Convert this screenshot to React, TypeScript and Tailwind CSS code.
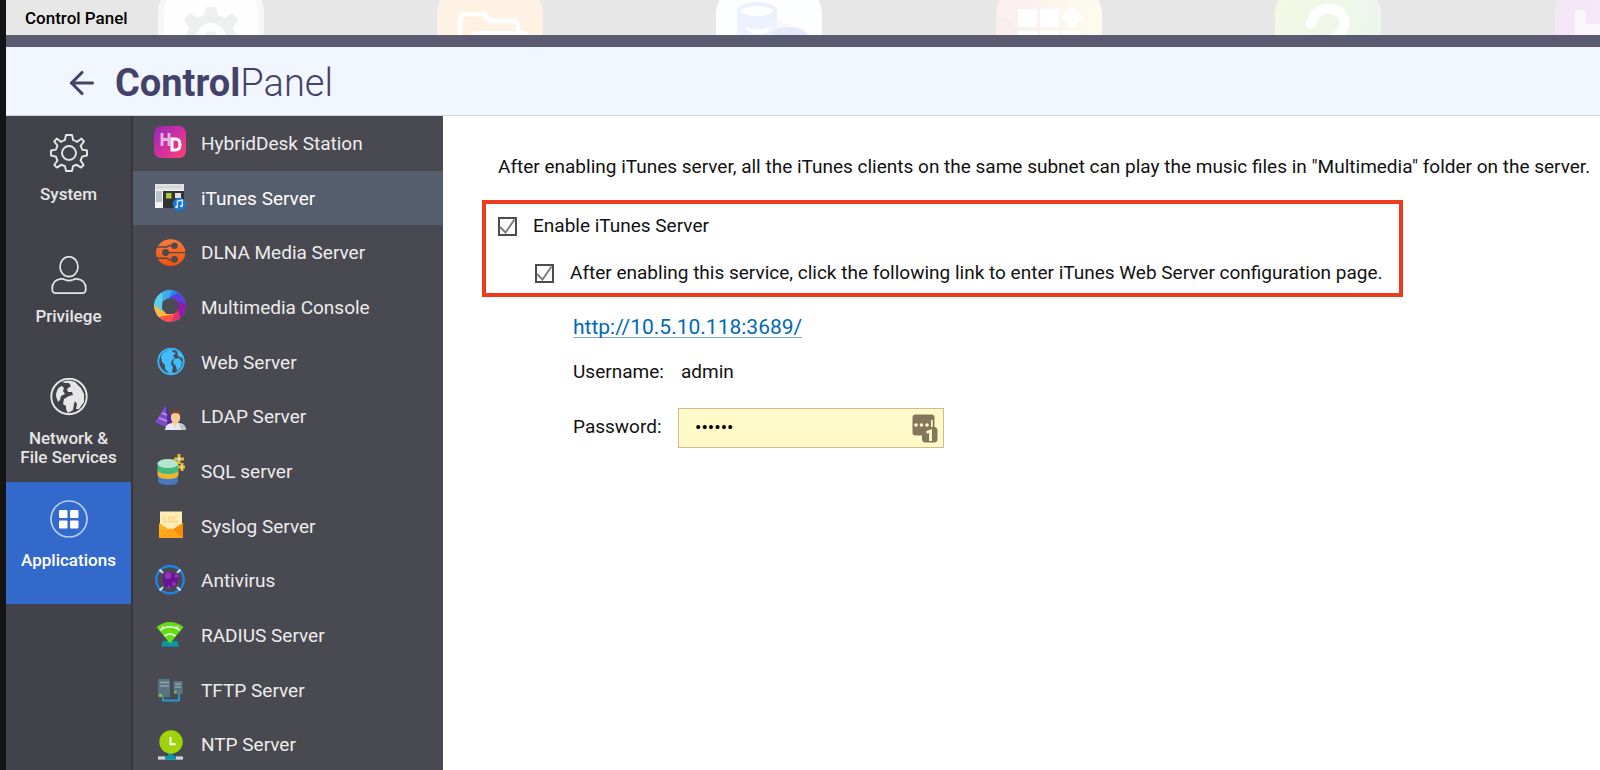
import React from "react";
import { ArrowLeft } from "lucide-react";

const Backdrop = () => (
  <svg
    aria-hidden="true"
    className="absolute inset-0 h-full w-full"
    viewBox="6 0 1594 35"
    preserveAspectRatio="xMinYMin slice"
  >
    <defs>
      <linearGradient id="store" x1="0" x2="1" y1="0" y2="0.2">
        <stop offset="0.3" stopColor="#fcefef" />
        <stop offset="0.6" stopColor="#fcf7ec" />
        <stop offset="1" stopColor="#fbfbee" />
      </linearGradient>
      <linearGradient id="help" x1="0" x2="1" y1="0" y2="0.4">
        <stop offset="0" stopColor="#f5f8e4" />
        <stop offset="1" stopColor="#ebf6eb" />
      </linearGradient>
      <linearGradient id="hybrid" x1="0" x2="1">
        <stop offset="0" stopColor="#f4e6f6" />
        <stop offset="1" stopColor="#f6e9f8" />
      </linearGradient>
    </defs>
    <rect x="158" y="-14" width="106" height="106" rx="26" fill="#f7f7f7" />
    <rect x="164" y="-14" width="94" height="106" rx="26" fill="#fefefe" />
    <g fill="#edf0ef">
      <path d="M206 7h10l2 8 7 3 7-5 6 7-5 8 4 10h-52l4-10-5-8 6-7 7 5 7-3z" />
      <circle cx="211" cy="38" r="15" fill="#fefefe" />
      <circle cx="211" cy="38" r="7" />
    </g>
    <rect x="437" y="-14" width="106" height="106" rx="28" fill="#fef2e4" />
    <path d="M460 36V22q0-8 7-8h17l6 7h23q5 0 5 6v5" fill="none" stroke="#fff" strokeWidth="4.500" />
    <path d="M471 36q0-5 4-5h52v5z" fill="#fff" />
    <rect x="716" y="-14" width="106" height="106" rx="28" fill="#fdfeff" />
    <path d="M776 17l28 18h-28z" fill="#f7f9ff" />
    <path d="M737 12v23h40V12z" fill="#edf2fe" />
    <path d="M745 27q12 5 26 0-2 7-13 7-10 0-13-7zM741 36q16 4 32-3v3z" fill="#fff" />
    <ellipse cx="757" cy="11" rx="18" ry="7" fill="#fff" stroke="#eaf1fe" strokeWidth="4" />
    <path d="M770 36q3-9 19-9t19 9z" fill="#e5eafa" />
    <rect x="996" y="-14" width="106" height="106" rx="28" fill="url(#store)" />
    <path d="M996 16l14 4 10 15h-24z" fill="#f9eeee" />
    <g fill="#fff">
      <rect x="1018" y="9" width="19" height="18" />
      <rect x="1040" y="9" width="19" height="18" />
      <path d="M1072 7l11 10.500-11 10.500-11-10.500z" />
      <rect x="1018" y="31" width="19" height="5" />
      <rect x="1040" y="31" width="19" height="5" />
      <rect x="1062" y="31" width="18" height="5" />
    </g>
    <rect x="1275" y="-14" width="106" height="106" rx="28" fill="url(#help)" />
    <path d="M1311 24c3-11 10-16 18-15.500 14 1 18 13 14 20-2 5-6 7-8 9" fill="none" stroke="#fff" strokeWidth="10" strokeLinecap="round" />
    <rect x="1555" y="-14" width="106" height="106" rx="28" fill="url(#hybrid)" />
    <path d="M1575 10h11v14h14v12h-25z" fill="#fbf5fc" />
  </svg>
);

const GearIcon = () => (
  <svg viewBox="0 0 38 38" className="size-[38px]" fill="none" stroke="currentColor" strokeWidth="1.900" strokeLinejoin="round" aria-hidden="true">
    <path d="M16 1h6l1.200 5.200q2 .5 3.800 1.700L31.500 4.600 34 7.400 30.600 11.800q1 1.700 1.500 3.800L37 16.500v5l-5 1.200q-.5 2-1.500 3.700L33.600 31 31 33.600l-4.500-3q-1.700 1-3.500 1.500L22 37h-6l-1-4.900q-1.900-.5-3.600-1.500L7 33.600 4.300 31l3.200-4.600q-1-1.700-1.500-3.700L1 21.500v-5l5-.9q.5-2.100 1.500-3.800L4.200 7.400 6.800 4.600l4.300 3.300q1.800-1.200 3.700-1.700z" />
    <circle cx="19" cy="19" r="7" />
  </svg>
);

const PersonIcon = () => (
  <svg viewBox="0 0 38 38" className="size-[38px]" fill="none" stroke="currentColor" strokeWidth="1.700" aria-hidden="true">
    <ellipse cx="19" cy="10.700" rx="9" ry="10" />
    <path d="M6 37.200h26q3.800 0 3.800-4.500 0-8.500-8.500-9.800-2.300-.4-4.300.8-4 1.800-8 0-2-1.200-4.300-.8-8.500 1.300-8.500 9.800 0 4.500 3.800 4.500z" />
  </svg>
);

const GlobeIcon = () => (
  <svg viewBox="0 0 38 38" className="size-[38px]" aria-hidden="true">
    <circle cx="19" cy="18.500" r="17.700" fill="none" stroke="currentColor" strokeWidth="1.900" />
    <path
      fill="currentColor"
      d="M7 13q1-4 5-5l2 2-1 3 2 3-4 2-1 4-2 2-1-3q-2-4 0-8zM12 4q7-3 13 0l6 6 3 6 0 8-5 7-3 0 1-5-2-3-1 3-1 6-5 3-2-4 0-3-3-2 1-5 5-3 4-1-1-3-4 0-1-3 4-3-2-3-4 0z"
    />
  </svg>
);

const AppsIcon = () => (
  <svg viewBox="0 0 38 38" className="size-[38px]" aria-hidden="true">
    <circle cx="19" cy="19" r="18" fill="none" stroke="#b9d0f2" strokeWidth="1.700" />
    <g fill="#fff">
      <rect x="9" y="10" width="8.500" height="8" rx="1" />
      <rect x="20" y="10" width="8.500" height="8" rx="1" />
      <rect x="9" y="20.500" width="8.500" height="8" rx="1" />
      <rect x="20" y="20.500" width="8.500" height="8" rx="1" />
    </g>
  </svg>
);

const HybridDeskIcon = () => (
  <>
    <defs>
      <linearGradient id="hd" x1="0" y1="0" x2="1" y2="1">
        <stop offset="0" stopColor="#9328b8" />
        <stop offset="0.5" stopColor="#cf319f" />
        <stop offset="1" stopColor="#ff3d7a" />
      </linearGradient>
    </defs>
    <rect width="32" height="32" rx="7" fill="url(#hd)" />
    <path d="M8 7v13M15 7v13M8 13.500h7" stroke="#e6b4e2" strokeWidth="2.800" fill="none" />
    <path d="M18 13h3.500q4.500 0 4.500 5.500T21.500 24H18z" stroke="#fff" strokeWidth="3" fill="none" />
  </>
);

const ItunesIcon = () => (
  <>
    <rect x="1" y="3" width="29" height="24" fill="#f2f3f3" />
    <rect x="1" y="3" width="29" height="6" fill="#e2e2e2" />
    <path d="M3 6h25" stroke="#c3c3c3" />
    <rect x="2" y="10" width="6" height="11" fill="#b9c3ce" />
    <rect x="9" y="10" width="21" height="17" fill="#333" />
    <rect x="12" y="12" width="5.500" height="5.500" fill="#a9cb3b" />
    <rect x="21" y="12" width="6" height="5" fill="#e8dede" />
    <circle cx="25.300" cy="23.300" r="6.600" fill="#1976d2" />
    <path d="M23.300 26v-6l5-1v6" fill="none" stroke="#d9eaff" strokeWidth="1.300" />
    <circle cx="22.500" cy="26" r="1.300" fill="#d9eaff" />
    <circle cx="27.500" cy="25" r="1.300" fill="#d9eaff" />
  </>
);

const DlnaIcon = () => (
  <>
    <defs>
      <linearGradient id="dlna" x1="0" y1="0" x2="0" y2="1">
        <stop offset="0" stopColor="#ff7a3a" />
        <stop offset="1" stopColor="#f2500c" />
      </linearGradient>
    </defs>
    <ellipse cx="16.700" cy="16.600" rx="14.700" ry="13.300" fill="url(#dlna)" />
    <g stroke="#4b4a52" strokeWidth="1.400" fill="none">
      <path d="M3 11h9.500l3-1.500H20M3 22.200h9.500l3 1.500H20M14 16.600h18" />
    </g>
    <g fill="#4b4a52">
      <circle cx="20.500" cy="9.800" r="3.300" />
      <circle cx="20.500" cy="23.400" r="3.300" />
      <circle cx="11.500" cy="16.600" r="3.500" />
    </g>
  </>
);

const MultimediaIcon = () => (
  <>
    <circle cx="16" cy="16" r="16" fill="#2f7fe6" />
    <path d="M16 16L8 2Q15-2 24 2.200L27 5z" fill="#2589ea" />
    <path d="M10 11L24 2.200Q31 7 32 15l-5 5-6-9z" fill="#5b3fdc" />
    <path d="M16 9l16 5q.5 9-6 14.500l-8-5 4-5z" fill="#8e1ca6" />
    <path d="M22 13l4.500 15Q20 33 12 31.500l-2-7 11-3z" fill="#e0346f" />
    <path d="M22 21L17 32Q8 32 3 25l6-3z" fill="#ff5540" />
    <path d="M20 24L4.500 27Q-.5 20 0 14l8 3z" fill="#ffb93c" />
    <path d="M9 22L0 15Q1 6 8.500 2L15 8z" fill="#5bd0e6" />
    <path d="M8 17L8.500 2Q13-.5 18 .2L14 9z" fill="#40abe8" />
    <path d="M13 8.500h7l4.500 5-.5 7-4.500 3.500h-7L8 19l.5-7z" fill="#4a4a52" />
  </>
);

const WebIcon = () => (
  <>
    <circle cx="17" cy="16.500" r="12.700" fill="none" stroke="#38b6f8" strokeWidth="1.900" />
    <path
      fill="#42bdfb"
      d="M14 5l5 0-1 2 4 1-3 3 2 2-3 2-1 4 2 3-1 4 1 3-4-1-4-4 0-4-3-3-1-5 2-4zM20 14l5-1 3 4-1 5-4 4-1-5-3-3zM23 5l5 5 0 3-4-2z"
    />
  </>
);

const LdapIcon = () => (
  <>
    <path d="M12 5L1 22l13 6z" fill="#7d4bc8" />
    <path d="M12 5l8 19-6 4z" fill="#5127a0" />
    <path d="M8 13l5 2M5 18l8 3" stroke="#b99be8" strokeWidth="1.400" />
    <path d="M11 30q0-6 7-7h7q7 1 7 7z" fill="#e4e9ee" />
    <path d="M18 22h6l-3 6z" fill="#f5cfa0" />
    <ellipse cx="21.500" cy="17.500" rx="4.700" ry="6" fill="#f7c995" />
    <path d="M16 16q-1-6 5.500-6T27 16q-2-3-5.500-3T16 16z" fill="#73452e" />
    <path d="M25 24l2 6h5q0-5-7-6z" fill="#b9c6cf" />
  </>
);

const SqlIcon = () => (
  <>
    <path d="M4 21v6q1 4 10.500 4T24 27v-6z" fill="#4878bd" />
    <path d="M3.500 16v5q1 4 10.500 4t10.500-4v-5z" fill="#f1b52d" />
    <path d="M3.500 9v7q1 4 10.500 4t10.500-4V9z" fill="#43b883" />
    <ellipse cx="14" cy="9.500" rx="10.500" ry="4.500" fill="#b4e5cd" />
    <path d="M25 0v10M20 5h10M28 9v8M24 13h7" stroke="#efb812" strokeWidth="3" />
    <path d="M25 3v4M23 5h4M28 11v4" stroke="#c8d9e4" strokeWidth="2" />
  </>
);

const SyslogIcon = () => (
  <>
    <rect x="6" y="2.500" width="22" height="18" fill="#ffedb5" />
    <path d="M10 8v5h3M15 8h3v5h-3zM23 8h-3v5h3v-2" stroke="#f7cf82" strokeWidth="1.200" fill="none" />
    <path d="M5 14l12 8 12-8v15H5z" fill="#ffad18" />
    <path d="M29 14v15H17l-4-5z" fill="#fb8c00" />
    <path d="M5 29l10-9q2-1 4 0l10 9z" fill="#ffa31a" />
  </>
);

const AntivirusIcon = () => (
  <>
    <circle cx="16" cy="15.700" r="13.700" fill="none" stroke="#1d83e4" strokeWidth="2.300" />
    <path d="M5.500 5.500l3.500 3.500M26.500 5.500l-3.500 3.500M5.500 26.500l3.500-3.500M26.500 26.500l-3.500-3.500" stroke="#d6dadd" strokeWidth="2.200" />
    <path d="M9 11q2-5 8-3l3 2 4-1 1 5-2 4-1 4-6 2q-6-1-7-6z" fill="#6a1296" />
    <circle cx="14" cy="11.500" r="3.500" fill="#8b37b5" />
    <circle cx="22.500" cy="12" r="2" fill="#8b37b5" />
    <circle cx="20" cy="20" r="2" fill="#8b37b5" />
    <circle cx="15" cy="23" r="1.500" fill="#a02fc4" />
  </>
);

const RadiusIcon = () => (
  <>
    <path d="M9 23h14l2 5.500H7z" fill="#0c97a7" />
    <path d="M2.500 9Q16-1 29.500 9L16 25.500z" fill="#64dd17" />
    <path d="M6 12q10-6.500 20 0M10.500 18q5.500-4 11 0" fill="none" stroke="#f0ffe0" strokeWidth="1.700" />
    <path d="M8 8l2 3M24 8l-2 3" stroke="#f0ffe0" strokeWidth="1.200" />
  </>
);

const TftpIcon = () => (
  <>
    <rect x="4" y="6" width="12" height="18" fill="#587482" />
    <rect x="19.500" y="8" width="9" height="13" fill="#587482" />
    <path d="M6 9.500h9M6 13h9M21 11h6M21 14h6" stroke="#8fa4af" strokeWidth="1.400" />
    <circle cx="6.500" cy="22.500" r="1.700" fill="#8bc34a" />
    <circle cx="21.500" cy="19" r="1.200" fill="#8bc34a" />
    <path d="M9 24v3.500h16V21" fill="none" stroke="#2599d8" strokeWidth="1.900" />
  </>
);

const NtpIcon = () => (
  <>
    <path d="M4 30h25" stroke="#cfd3d5" strokeWidth="3.300" />
    <path d="M14 24h5v4h3v3.700H11V28h3z" fill="#0c97a7" />
    <circle cx="17" cy="14" r="11.700" fill="#9fd40a" />
    <path d="M16.500 9v7.200h5" fill="none" stroke="#fff" strokeWidth="1.900" />
  </>
);

const apps = [
  { name: "HybridDesk Station", Icon: HybridDeskIcon },
  { name: "iTunes Server", Icon: ItunesIcon },
  { name: "DLNA Media Server", Icon: DlnaIcon },
  { name: "Multimedia Console", Icon: MultimediaIcon },
  { name: "Web Server", Icon: WebIcon },
  { name: "LDAP Server", Icon: LdapIcon },
  { name: "SQL server", Icon: SqlIcon },
  { name: "Syslog Server", Icon: SyslogIcon },
  { name: "Antivirus", Icon: AntivirusIcon },
  { name: "RADIUS Server", Icon: RadiusIcon },
  { name: "TFTP Server", Icon: TftpIcon },
  { name: "NTP Server", Icon: NtpIcon },
];

const sections = [
  { name: "System", Icon: GearIcon },
  { name: "Privilege", Icon: PersonIcon },
  { name: "Network & File Services", Icon: GlobeIcon },
  { name: "Applications", Icon: AppsIcon },
];

function CheckRow({ id, label }: { id: string; label: string }) {
  return (
    <div className="flex items-center gap-4">
      <span className="grid size-[19px] shrink-0">
        <input
          id={id}
          type="checkbox"
          defaultChecked
          className="peer col-start-1 row-start-1 size-[19px] appearance-none border-2 border-[#4c4c4c] bg-[#fcfcfc]"
        />
        <svg
          viewBox="0 0 19 19"
          aria-hidden="true"
          className="pointer-events-none invisible col-start-1 row-start-1 peer-checked:visible"
        >
          <path d="M2 10l5.500 5.500L16.500 2.500" fill="none" stroke="#777" strokeWidth="1.800" />
        </svg>
      </span>
      <label htmlFor={id}>{label}</label>
    </div>
  );
}

export default function App() {
  const [section, setSection] = React.useState("Applications");
  const [app, setApp] = React.useState("iTunes Server");

  return (
    <div className="flex h-screen flex-col overflow-hidden border-l-[6px] border-[#141414] bg-white font-['Roboto',sans-serif] text-[19px] text-[#111]">
      <div className="relative flex h-[35px] shrink-0 items-center overflow-hidden bg-[#e7e7e7] px-[19px] pt-0.5">
        <Backdrop />
        <span className="relative text-[17px] font-medium text-black">Control Panel</span>
      </div>
      <div className="h-3 shrink-0 bg-[#5a5b70]" />
      <header className="flex h-[69px] shrink-0 items-center gap-[15px] border-b border-[#cfd4dc] bg-[#f2f6ff] pt-[3px] pl-[58px] text-[#42426a]">
        <button type="button" aria-label="Back">
          <ArrowLeft className="size-9" strokeWidth={2.1} />
        </button>
        <h1 className="text-[38px] leading-none">
          <b className="font-bold">Control</b>
          <span className="font-light">Panel</span>
        </h1>
      </header>

      <div className="flex min-h-0 flex-1">
        <nav aria-label="Sections" className="w-[125px] shrink-0 bg-[#42424a] text-[17px] leading-[19px] font-medium text-[#e6e6e6]">
          {sections.map(({ name, Icon }) => (
            <button
              key={name}
              type="button"
              onClick={() => setSection(name)}
              className={
                section === name
                  ? "flex h-[122px] w-full flex-col items-center gap-[13px] bg-[#3369ca] px-2 pt-[18px] text-white"
                  : "flex h-[122px] w-full flex-col items-center gap-[13px] px-2 pt-[18px]"
              }
            >
              <Icon />
              <span>{name}</span>
            </button>
          ))}
        </nav>

        <nav aria-label="Applications" className="w-[312px] shrink-0 overflow-hidden border-l-2 border-[#38383c] bg-[#494951] text-[#ececec]">
          <ul className="grid h-[656px] grid-rows-12">
            {apps.map(({ name, Icon }) => (
              <li key={name} className="grid">
                <button
                  type="button"
                  onClick={() => setApp(name)}
                  className={
                    app === name
                      ? "flex items-center gap-[15px] bg-[#565d6c] pl-[21px] text-left text-white"
                      : "flex items-center gap-[15px] pl-[21px] text-left"
                  }
                >
                  <svg viewBox="0 0 32 32" className="mb-0.5 size-8 shrink-0" aria-hidden="true">
                    <Icon />
                  </svg>
                  <span className="pt-0.5">{name}</span>
                </button>
              </li>
            ))}
          </ul>
        </nav>

        <main className="min-w-0 flex-1 pt-9 pl-[39px]">
          <p className="pl-4 leading-[30px] whitespace-nowrap">
            After enabling iTunes server, all the iTunes clients on the same subnet can play the music files in
            "Multimedia" folder on the server.
          </p>
          <div className="mt-[18px] flex w-fit flex-col gap-[17px] border-4 border-[#ee3b20] pt-[7px] pr-4 pb-[5px] pl-3 leading-[30px] whitespace-nowrap">
            <CheckRow id="enable-itunes" label="Enable iTunes Server" />
            <div className="pl-[37px]">
              <CheckRow
                id="enable-link"
                label="After enabling this service, click the following link to enter iTunes Web Server configuration page."
              />
            </div>
          </div>
          <div className="pl-[91px]">
            <a
              href="http://10.5.10.118:3689/"
              className="mt-[20px] inline-block border-b border-[#7fa5d6] text-[21px] leading-5 text-[#0068b7]"
            >
              http://10.5.10.118:3689/
            </a>
            <div className="mt-[14px] flex leading-[30px]">
              <span className="w-[108px]">Username:</span>
              <span>admin</span>
            </div>
            <div className="mt-[21px] flex items-center">
              <label htmlFor="password" className="w-[105px]">Password:</label>
              <div className="relative">
                <input
                  id="password"
                  type="password"
                  defaultValue="admin1"
                  className="h-10 w-[266px] border border-[#d5b98c] bg-[#fffac8] px-4 text-black"
                />
                <svg viewBox="0 0 26 29" aria-hidden="true" className="absolute top-1.5 right-1.5 h-[29px] w-[26px]">
                  <rect x="0.500" y="0.500" width="22" height="21" rx="3" fill="#84765b" />
                  <rect x="10" y="13" width="15.500" height="15.500" rx="3.500" fill="#84765b" />
                  <g fill="#fffac8">
                    <circle cx="4" cy="11" r="1.800" />
                    <circle cx="9.500" cy="11" r="1.800" />
                    <circle cx="15" cy="11" r="1.800" />
                    <rect x="19" y="6" width="1.700" height="7" />
                  </g>
                  <path d="M14.500 18.500l4-1.500v10" fill="none" stroke="#fffac8" strokeWidth="2.800" />
                </svg>
              </div>
            </div>
          </div>
        </main>
      </div>
    </div>
  );
}
